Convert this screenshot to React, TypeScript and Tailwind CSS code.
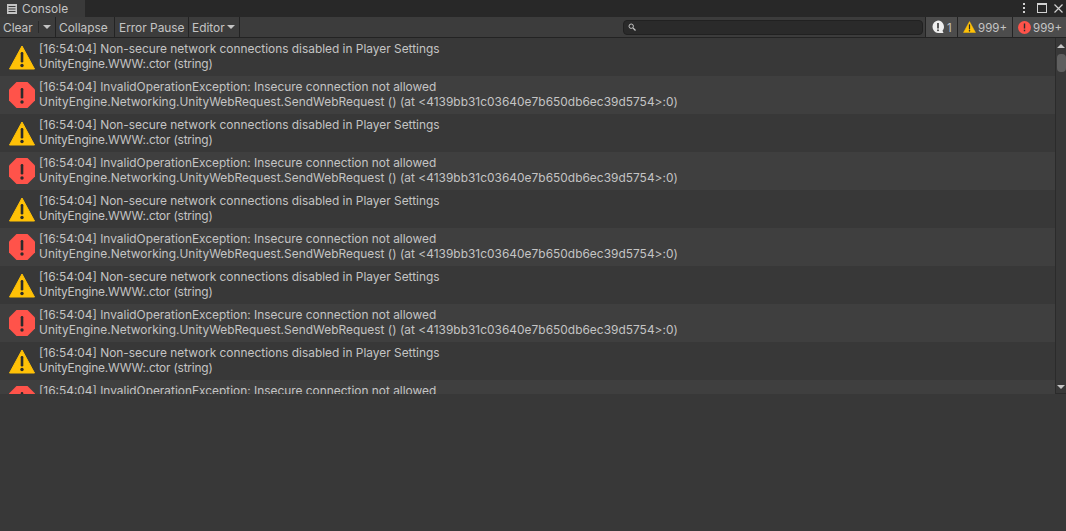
import type { ReactNode } from "react";

const Warn = ({ w, h }: { w: number; h: number }) => (
  <svg width={w} height={h} viewBox="0 0 26 25" className="shrink-0">
    <path d="M13 1 L25.5 24 H0.5 Z" fill="#ffc107" stroke="#ffc107" strokeWidth="1" strokeLinejoin="round" />
    <rect x="11.7" y="7" width="2.6" height="10.5" rx="1.2" fill="#2b2b2b" />
    <circle cx="13" cy="20.5" r="1.7" fill="#2b2b2b" />
  </svg>
);

const Stop = () => (
  <svg width="26" height="26" viewBox="0 0 26 26" className="shrink-0">
    <path d="M7.5 0 H18.5 L26 7.5 V18.5 L18.5 26 H7.5 L0 18.5 V7.5 Z" fill="#ff534a" />
    <rect x="11.7" y="6" width="2.6" height="10.5" rx="1.2" fill="#2b2b2b" />
    <circle cx="13" cy="20" r="1.7" fill="#2b2b2b" />
  </svg>
);

const Sep = () => <div className="w-px self-stretch bg-[#232323]" />;

const Btn = ({ children, cls = "" }: { children: ReactNode; cls?: string }) => (
  <div className={`flex h-full items-center pt-[1px] text-[11.9px] text-[#c4c4c4] ${cls}`}>{children}</div>
);

const Caret = () => <div className="-mt-[1px] h-0 w-0 border-x-[4px] border-t-[4px] border-x-transparent border-t-[#c4c4c4]" />;

const Count = ({ children }: { children: ReactNode }) => <span className="pt-[2px] leading-[14px]">{children}</span>;

const rows = Array.from({ length: 10 }, (_, i) => i);

export default function App() {
  return (
    <div className="flex h-[531px] w-[1066px] flex-col overflow-hidden bg-[#383838] font-['Inter',sans-serif]">
      {/* tab strip */}
      <div className="flex h-[17px] shrink-0 items-stretch bg-[#282828]">
        <div className="flex w-[85px] items-center gap-[5px] bg-[#3a3a3a] pl-[7px] text-[11.9px] text-[#c4c4c4]">
          <svg width="10" height="10" viewBox="0 0 10 10" className="shrink-0">
            <rect width="10" height="10" fill="#c4c4c4" />
            <path d="M1.5 2.5H8.5M1.5 5H8.5M1.5 7.5H8.5" stroke="#3a3a3a" strokeWidth="1" />
          </svg>
          Console
        </div>
        <div className="ml-auto flex items-center pb-[1px]">
          <div className="mr-[12px] flex flex-col gap-[2px]">
            <div className="h-[2px] w-[2px] bg-[#d2d2d2]" />
            <div className="h-[2px] w-[2px] bg-[#d2d2d2]" />
            <div className="h-[2px] w-[2px] bg-[#d2d2d2]" />
          </div>
          <div className="mr-[7px] h-[10px] w-[10px] border border-t-2 border-[#d2d2d2]" />
          <svg width="9" height="9" viewBox="0 0 9 9" className="mr-[3px]">
            <path d="M0.5 0.5L8.5 8.5M8.5 0.5L0.5 8.5" stroke="#d2d2d2" strokeWidth="1.2" />
          </svg>
        </div>
      </div>

      {/* toolbar */}
      <div className="flex h-[21px] shrink-0 items-stretch border-b border-[#232323] bg-[#3c3c3c]">
        <Btn cls="w-[38px] pl-[3px]">Clear</Btn>
        <div className="my-[4px] w-px bg-[#2a2a2a]" />
        <Btn cls="w-[16px] justify-center"><Caret /></Btn>
        <Sep />
        <Btn cls="w-[58px] pl-[3px]">Collapse</Btn>
        <Sep />
        <Btn cls="w-[73px] pl-[4px]">Error Pause</Btn>
        <Sep />
        <Btn cls="w-[50px] gap-[2px] pl-[3px]">Editor <Caret /></Btn>
        <Sep />
        <div className="flex flex-1 items-center justify-end pr-[2px]">
          <div className="flex h-[15px] w-[300px] items-center rounded-[4px] border border-[#212121] bg-[#2a2a2a] pl-[4px]">
            <svg width="8" height="8" viewBox="0 0 8 8">
              <circle cx="3.2" cy="3.2" r="2.2" fill="none" stroke="#c4c4c4" strokeWidth="1" />
              <path d="M5 5L7.5 7.5" stroke="#c4c4c4" strokeWidth="1.2" />
            </svg>
          </div>
        </div>
        <Sep />
        <div className="flex w-[31px] items-center gap-[2px] bg-[#4c4c4c] pl-[5px] text-[11.5px] text-[#c4c4c4]">
          <svg width="14" height="14" viewBox="0 0 14 14" className="shrink-0">
            <path d="M7 0.5A6.3 6.3 0 0 0 7 13H12.5L11.5 10.8A6.3 6.3 0 0 0 7 0.5Z" fill="#eeeeee" />
            <rect x="6.2" y="3" width="1.6" height="5.5" fill="#333" />
            <rect x="6.2" y="9.5" width="1.6" height="1.6" fill="#333" />
          </svg>
          <Count>1</Count>
        </div>
        <Sep />
        <div className="flex w-[54px] items-center gap-[2px] bg-[#4c4c4c] pl-[5px] text-[11.5px] text-[#c4c4c4]">
          <Warn w={13} h={12} />
          <Count>999+</Count>
        </div>
        <Sep />
        <div className="flex w-[53px] items-center gap-[2px] bg-[#4c4c4c] pl-[5px] text-[11.5px] text-[#c4c4c4]">
          <svg width="13" height="13" viewBox="0 0 13 13" className="shrink-0">
            <circle cx="6.5" cy="6.5" r="6.5" fill="#ff534a" />
            <rect x="5.8" y="2.5" width="1.4" height="5" fill="#2b2b2b" />
            <rect x="5.8" y="8.7" width="1.4" height="1.6" fill="#2b2b2b" />
          </svg>
          <Count>999+</Count>
        </div>
      </div>

      {/* log list */}
      <div className="flex h-[356px] shrink-0">
        <div className="min-w-0 flex-1 overflow-hidden">
          {rows.map((i) => {
            const isWarn = i % 2 === 0;
            return (
              <div
                key={i}
                className={`flex h-[38px] items-center ${isWarn ? "bg-[#383838]" : "bg-[#3f3f3f]"}`}
              >
                <div className="flex w-[39px] shrink-0 pl-[9px]">
                  {isWarn ? <Warn w={26} h={25} /> : <Stop />}
                </div>
                <div className="whitespace-nowrap pb-[2px] text-[11.9px] leading-[15px] text-[#c4c4c4]">
                  <div>
                    {isWarn
                      ? "[16:54:04] Non-secure network connections disabled in Player Settings"
                      : "[16:54:04] InvalidOperationException: Insecure connection not allowed"}
                  </div>
                  {isWarn ? (
                    <div className="tracking-[-0.2px]">UnityEngine.WWW:.ctor (string)</div>
                  ) : (
                    <div className="tracking-[0.03px]">
                      {"UnityEngine.Networking.UnityWebRequest.SendWebRequest () (at <4139bb31c03640e7b650db6ec39d5754>:0)"}
                    </div>
                  )}
                </div>
              </div>
            );
          })}
        </div>

        {/* scrollbar */}
        <div className="flex w-[11px] shrink-0 flex-col items-center justify-between border-b border-l border-[#2b2b2b] bg-[#383838] pt-[6px] pb-[4px]">
          <div className="flex flex-col items-center gap-[6px]">
            <div className="h-0 w-0 border-x-[4px] border-b-[4px] border-x-transparent border-b-[#c4c4c4]" />
            <div className="h-[18px] w-[9px] rounded-[4px] bg-[#5f5f5f]" />
          </div>
          <div className="h-0 w-0 border-x-[4px] border-t-[4px] border-x-transparent border-t-[#c4c4c4]" />
        </div>
      </div>

      <div className="flex-1 bg-[#383838]" />
    </div>
  );
}
